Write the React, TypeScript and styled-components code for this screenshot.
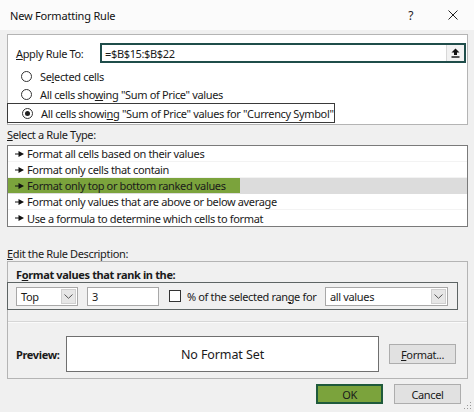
import styled, { createGlobalStyle, css } from 'styled-components';

const GlobalStyle = createGlobalStyle`
  html, body {
    margin: 0;
    padding: 0;
    background: #f0f0f0;
  }
  body {
    font-family: 'Noto Sans', 'Open Sans', sans-serif;
    font-size: 11px;
    letter-spacing: -0.35px;
    color: #1a1a1a;
    white-space: nowrap;
  }
`;

const rules = [
  'Format all cells based on their values',
  'Format only cells that contain',
  'Format only top or bottom ranked values',
  'Format only values that are above or below average',
  'Use a formula to determine which cells to format',
];

export default function App() {
  return (
    <Dialog>
      <GlobalStyle />
      <TitleBar>
        <Title>New Formatting Rule</Title>
        <TitleActions>
          <HelpMark>?</HelpMark>
          <svg width="10" height="10" viewBox="0 0 10 10">
            <path d="M0.5 0.5 L9.5 9.5 M9.5 0.5 L0.5 9.5" stroke="#222" strokeWidth="1" />
          </svg>
        </TitleActions>
      </TitleBar>

      <Body>
        <ApplyBox>
          <ApplyRow>
            <FieldLabel>
              <u>A</u>pply Rule To:
            </FieldLabel>
            <RangeInput>
              <span>=$B$15:$B$22</span>
              <UploadButton>
                <svg width="9" height="10" viewBox="0 0 9 10">
                  <path d="M4.5 0.5 L8.5 4.5 L6 4.5 L6 7 L3 7 L3 4.5 L0.5 4.5 Z" fill="#111" />
                  <rect x="0.5" y="8.3" width="8" height="1.4" fill="#111" />
                </svg>
              </UploadButton>
            </RangeInput>
          </ApplyRow>
          <RadioRow>
            <Radio />
            <span>
              Se<u>l</u>ected cells
            </span>
          </RadioRow>
          <RadioRow>
            <Radio />
            <span>
              All cells sho<u>w</u>ing "Sum of Price" values
            </span>
          </RadioRow>
          <RadioRow $focused>
            <Radio $checked />
            <span>
              All cells showi<u>n</u>g "Sum of Price" values for "Currency Symbol"
            </span>
          </RadioRow>
        </ApplyBox>

        <SectionLabel $top={2}>
          <u>S</u>elect a Rule Type:
        </SectionLabel>
        <RuleList>
          {rules.map((rule, i) => (
            <RuleItem key={rule} $selected={i === 2}>
              <RuleText $selected={i === 2}>
                <svg width="9" height="6" viewBox="0 0 9 6">
                  <path d="M0 2.5 H4 V3.5 H0 Z" fill="#111" />
                  <path d="M3.5 0 L9 3 L3.5 6 Z" fill="#111" />
                </svg>
                {rule}
              </RuleText>
            </RuleItem>
          ))}
        </RuleList>

        <SectionLabel $top={19}>
          <u>E</u>dit the Rule Description:
        </SectionLabel>
        <DescBox>
          <BoldLabel>
            F<u>o</u>rmat values that rank in the:
          </BoldLabel>
          <ControlRow>
            <Combo $width={62}>
              <span>Top</span>
              <ComboArrow>
                <Chevron />
              </ComboArrow>
            </Combo>
            <NumberInput>3</NumberInput>
            <CheckBox />
            <CheckLabel>
              % of the selected ran<u>g</u>e for
            </CheckLabel>
            <Combo $width={123}>
              <span>all values</span>
              <ComboArrow>
                <Chevron />
              </ComboArrow>
            </Combo>
          </ControlRow>
          <Separator />
          <PreviewRow>
            <PreviewLabel>Preview:</PreviewLabel>
            <PreviewBox>No Format Set</PreviewBox>
            <Button>
              <u>F</u>ormat...
            </Button>
          </PreviewRow>
        </DescBox>

        <Footer>
          <Button $primary>OK</Button>
          <Button>Cancel</Button>
        </Footer>
      </Body>
      <Grip>
        <svg width="8" height="8" viewBox="0 0 8 8">
          <rect x="6" y="0" width="1" height="1" fill="#999" />
          <rect x="3" y="3" width="1" height="1" fill="#999" />
          <rect x="6" y="3" width="1" height="1" fill="#999" />
          <rect x="0" y="6" width="1" height="1" fill="#999" />
          <rect x="3" y="6" width="1" height="1" fill="#999" />
          <rect x="6" y="6" width="1" height="1" fill="#999" />
        </svg>
      </Grip>
    </Dialog>
  );
}

function Chevron() {
  return (
    <svg width="9" height="5" viewBox="0 0 9 5">
      <path d="M0.5 0.5 L4.5 4.3 L8.5 0.5" stroke="#555" strokeWidth="1" fill="none" />
    </svg>
  );
}

const Dialog = styled.div`
  position: relative;
  width: 474px;
  height: 412px;
  display: flex;
  flex-direction: column;
  background: #f0f0f0;
  overflow: hidden;
`;

const TitleBar = styled.div`
  height: 30px;
  flex-shrink: 0;
  background: #fbfbfb;
  display: flex;
  align-items: center;
  justify-content: space-between;
  padding: 0 16px 0 10px;
`;

const Title = styled.span`
  font-size: 11px;
  letter-spacing: -0.2px;
  color: #111;
`;

const TitleActions = styled.div`
  display: flex;
  align-items: center;
  gap: 35px;
`;

const HelpMark = styled.span`
  font-size: 12px;
  color: #222;
`;

const Body = styled.div`
  display: flex;
  flex-direction: column;
  padding: 4px 6px 0 7px;
`;

const ApplyBox = styled.div`
  height: 91px;
  box-sizing: border-box;
  border: 1px solid #b4b4b4;
  background: #fff;
  display: flex;
  flex-direction: column;
`;

const ApplyRow = styled.div`
  display: flex;
  align-items: center;
  margin: 8px 0 4px 8px;
  gap: 8px;
`;

const FieldLabel = styled.span`
  width: 76px;
`;

const RangeInput = styled.div`
  width: 366px;
  height: 20px;
  box-sizing: border-box;
  border: 2px solid #1f4d4a;
  display: flex;
  align-items: center;
  justify-content: space-between;
  padding-left: 3px;
`;

const UploadButton = styled.div`
  width: 17px;
  height: 16px;
  background: #f2f2f2;
  border-left: 1px solid #d8d8d8;
  display: flex;
  align-items: center;
  justify-content: center;
`;

const RadioRow = styled.div<{ $focused?: boolean }>`
  display: flex;
  align-items: center;
  gap: 8px;
  height: 18px;
  padding-left: 14px;
  margin-left: -1px;
  box-sizing: border-box;
  ${(p) =>
    p.$focused &&
    css`
      width: 328px;
      height: 20px;
      border: 1px solid #3a3a3a;
    `}
`;

const Radio = styled.span<{ $checked?: boolean }>`
  width: 11px;
  height: 11px;
  border-radius: 50%;
  border: 1px solid #333;
  box-sizing: border-box;
  display: flex;
  align-items: center;
  justify-content: center;
  &::after {
    content: '';
    width: 5px;
    height: 5px;
    border-radius: 50%;
    background: ${(p) => (p.$checked ? '#222' : 'transparent')};
  }
`;

const SectionLabel = styled.div<{ $top: number }>`
  margin-top: ${(p) => p.$top}px;
  height: 15px;
  line-height: 15px;
`;

const RuleList = styled.div`
  margin-top: 3px;
  border: 1px solid #7a7a7a;
  background: #fff;
  display: flex;
  flex-direction: column;
`;

const RuleItem = styled.div<{ $selected?: boolean }>`
  height: 16px;
  box-sizing: border-box;
  display: flex;
  background: ${(p) => (p.$selected ? '#dcdcdc' : '#fff')};
  border-bottom: 1px solid ${(p) => (p.$selected ? '#dcdcdc' : '#f3f3f3')};
  &:last-child {
    border-bottom: none;
  }
`;

const RuleText = styled.div<{ $selected?: boolean }>`
  display: flex;
  align-items: center;
  gap: 3px;
  padding: 0 6px 0 7px;
  width: ${(p) => (p.$selected ? '219px' : 'auto')};
  background: ${(p) => (p.$selected ? '#7ba33c' : 'transparent')};
`;

const DescBox = styled.div`
  margin-top: 0;
  height: 118px;
  box-sizing: border-box;
  border: 1px solid #b4b4b4;
  display: flex;
  flex-direction: column;
`;

const BoldLabel = styled.span`
  font-weight: bold;
  padding-left: 8px;
  margin-top: 5px;
  height: 16px;
  line-height: 16px;
`;

const ControlRow = styled.div`
  margin: -1px 9px 0 -1px;
  height: 28px;
  box-sizing: border-box;
  border: 1px solid #5d6464;
  display: flex;
  align-items: center;
  gap: 8px;
  padding-left: 8px;
`;

const Combo = styled.div<{ $width: number }>`
  width: ${(p) => p.$width}px;
  height: 19px;
  box-sizing: border-box;
  border: 1px solid #a8a8a8;
  background: #fff;
  display: flex;
  align-items: center;
  justify-content: space-between;
  padding: 0 1px 0 4px;
`;

const ComboArrow = styled.div`
  width: 15px;
  height: 15px;
  background: #e6e6e6;
  border: 1px solid #cfcfcf;
  box-sizing: border-box;
  display: flex;
  align-items: center;
  justify-content: center;
`;

const NumberInput = styled.div`
  width: 72px;
  height: 19px;
  box-sizing: border-box;
  border: 1px solid #a8a8a8;
  background: #fff;
  padding-left: 4px;
  line-height: 17px;
  margin-left: 1px;
`;

const CheckBox = styled.span`
  width: 12px;
  height: 12px;
  box-sizing: border-box;
  border: 1px solid #333;
  background: #fff;
  margin-left: 2px;
`;

const CheckLabel = styled.span`
  width: 130px;
  margin-left: -2px;
`;

const Separator = styled.div`
  margin-top: 11px;
  height: 1px;
  background: #d6d6d6;
  border-bottom: 1px solid #fafafa;
`;

const PreviewRow = styled.div`
  display: flex;
  align-items: center;
  padding-left: 8px;
  margin-top: 13px;
`;

const PreviewLabel = styled.span`
  width: 50px;
  font-weight: bold;
`;

const PreviewBox = styled.div`
  width: 313px;
  height: 36px;
  box-sizing: border-box;
  border: 1px solid #6f6f6f;
  background: #fff;
  display: flex;
  align-items: center;
  justify-content: center;
  font-size: 12.5px;
  letter-spacing: -0.1px;
  margin-right: 10px;
`;

const Button = styled.div<{ $primary?: boolean }>`
  width: 67px;
  height: 20px;
  box-sizing: border-box;
  display: flex;
  align-items: center;
  justify-content: center;
  background: ${(p) => (p.$primary ? '#7ba33c' : '#e1e1e1')};
  border: ${(p) => (p.$primary ? '2px solid #1f5a3c' : '1px solid #adadad')};
`;

const Footer = styled.div`
  display: flex;
  justify-content: flex-end;
  gap: 11px;
  margin-top: 5px;
  padding-right: 7px;
`;

const Grip = styled.div`
  position: absolute;
  right: 2px;
  bottom: 2px;
  display: flex;
`;
